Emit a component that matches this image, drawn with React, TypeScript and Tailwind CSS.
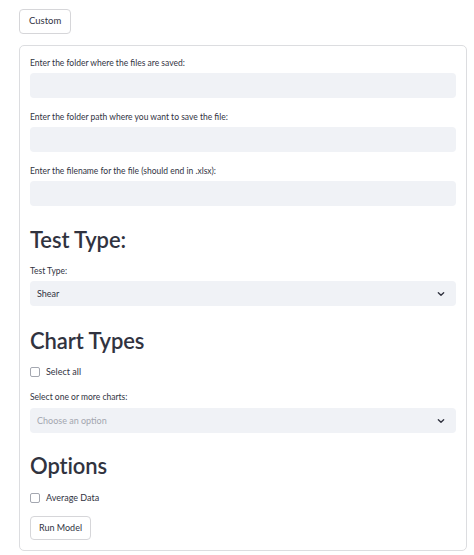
import React from "react";

// Piccolo chevron come quello dei select di Streamlit
const Chevron = () => (
  <svg width="8" height="8" viewBox="0 0 24 24" className="shrink-0">
    <path d="M4 8 L12 16 L20 8" fill="none" stroke="#31333f" strokeWidth="4" strokeLinecap="round" strokeLinejoin="round" />
  </svg>
);

const Label = ({ children }: { children: React.ReactNode }) => (
  <div className="text-[8.5px] leading-[12px] text-[#31333f] mb-[4px]">{children}</div>
);

const TextInput = () => <div className="h-[25px] w-full rounded-[4px] bg-[#f0f2f6]" />;

const Heading = ({ children, className }: { children: React.ReactNode; className?: string }) => (
  <h2 className={`text-[22px] leading-[28px] font-semibold text-[#31333f] tracking-[-0.1px] ${className ?? ""}`}>
    {children}
  </h2>
);

const Checkbox = ({ label }: { label: string }) => (
  <label className="flex items-center h-[12px] gap-[6px]">
    <span className="w-[10px] h-[10px] rounded-[2px] border border-[#a4a7b0] bg-white" />
    <span className="text-[9px] text-[#31333f]">{label}</span>
  </label>
);

const App: React.FC = () => {
  return (
    <div className="min-h-[555px] bg-white pt-[9px] pl-[19px] pr-[7px]" style={{ fontFamily: "Lato, 'Noto Sans', sans-serif" }}>
      {/* Bottone Custom */}
      <button className="block h-[25px] px-[9px] rounded-[4px] border border-[#d6d6d9] bg-white text-[9.5px] text-[#31333f]">
        Custom
      </button>

      {/* Form */}
      <div className="mt-[11px] w-[448px] rounded-[5px] border border-[#dcdde0] pt-[11px] pb-[10px] px-[10px]">
        <Label>Enter the folder where the files are saved:</Label>
        <TextInput />

        <div className="mt-[13px]">
          <Label>Enter the folder path where you want to save the file:</Label>
          <TextInput />
        </div>

        <div className="mt-[13px]">
          <Label>Enter the filename for the file (should end in .xlsx):</Label>
          <TextInput />
        </div>

        <Heading className="mt-[20px]">Test Type:</Heading>
        <div className="mt-[11px]">
          <Label>Test Type:</Label>
          <div className="h-[25px] rounded-[4px] bg-[#f0f2f6] flex items-center justify-between pl-[7px] pr-[11px]">
            <span className="text-[9px] text-[#31333f]">Shear</span>
            <Chevron />
          </div>
        </div>

        <Heading className="mt-[21px]">Chart Types</Heading>
        <div className="mt-[11px]">
          <Checkbox label="Select all" />
        </div>
        <div className="mt-[13px]">
          <div className="text-[8.5px] leading-[12px] text-[#31333f] mb-[5px]">Select one or more charts:</div>
          <div className="h-[25px] rounded-[4px] bg-[#f0f2f6] flex items-center justify-between pl-[7px] pr-[11px]">
            <span className="text-[9px] text-[#a3a6af]">Choose an option</span>
            <Chevron />
          </div>
        </div>

        <Heading className="mt-[19px]">Options</Heading>
        <div className="mt-[12px]">
          <Checkbox label="Average Data" />
        </div>

        {/* Bottone di submit */}
        <button className="block mt-[12px] h-[24px] px-[8px] rounded-[4px] border border-[#d6d6d9] bg-white text-[9px] text-[#31333f]">
          Run Model
        </button>
      </div>
    </div>
  );
};

export default App;
